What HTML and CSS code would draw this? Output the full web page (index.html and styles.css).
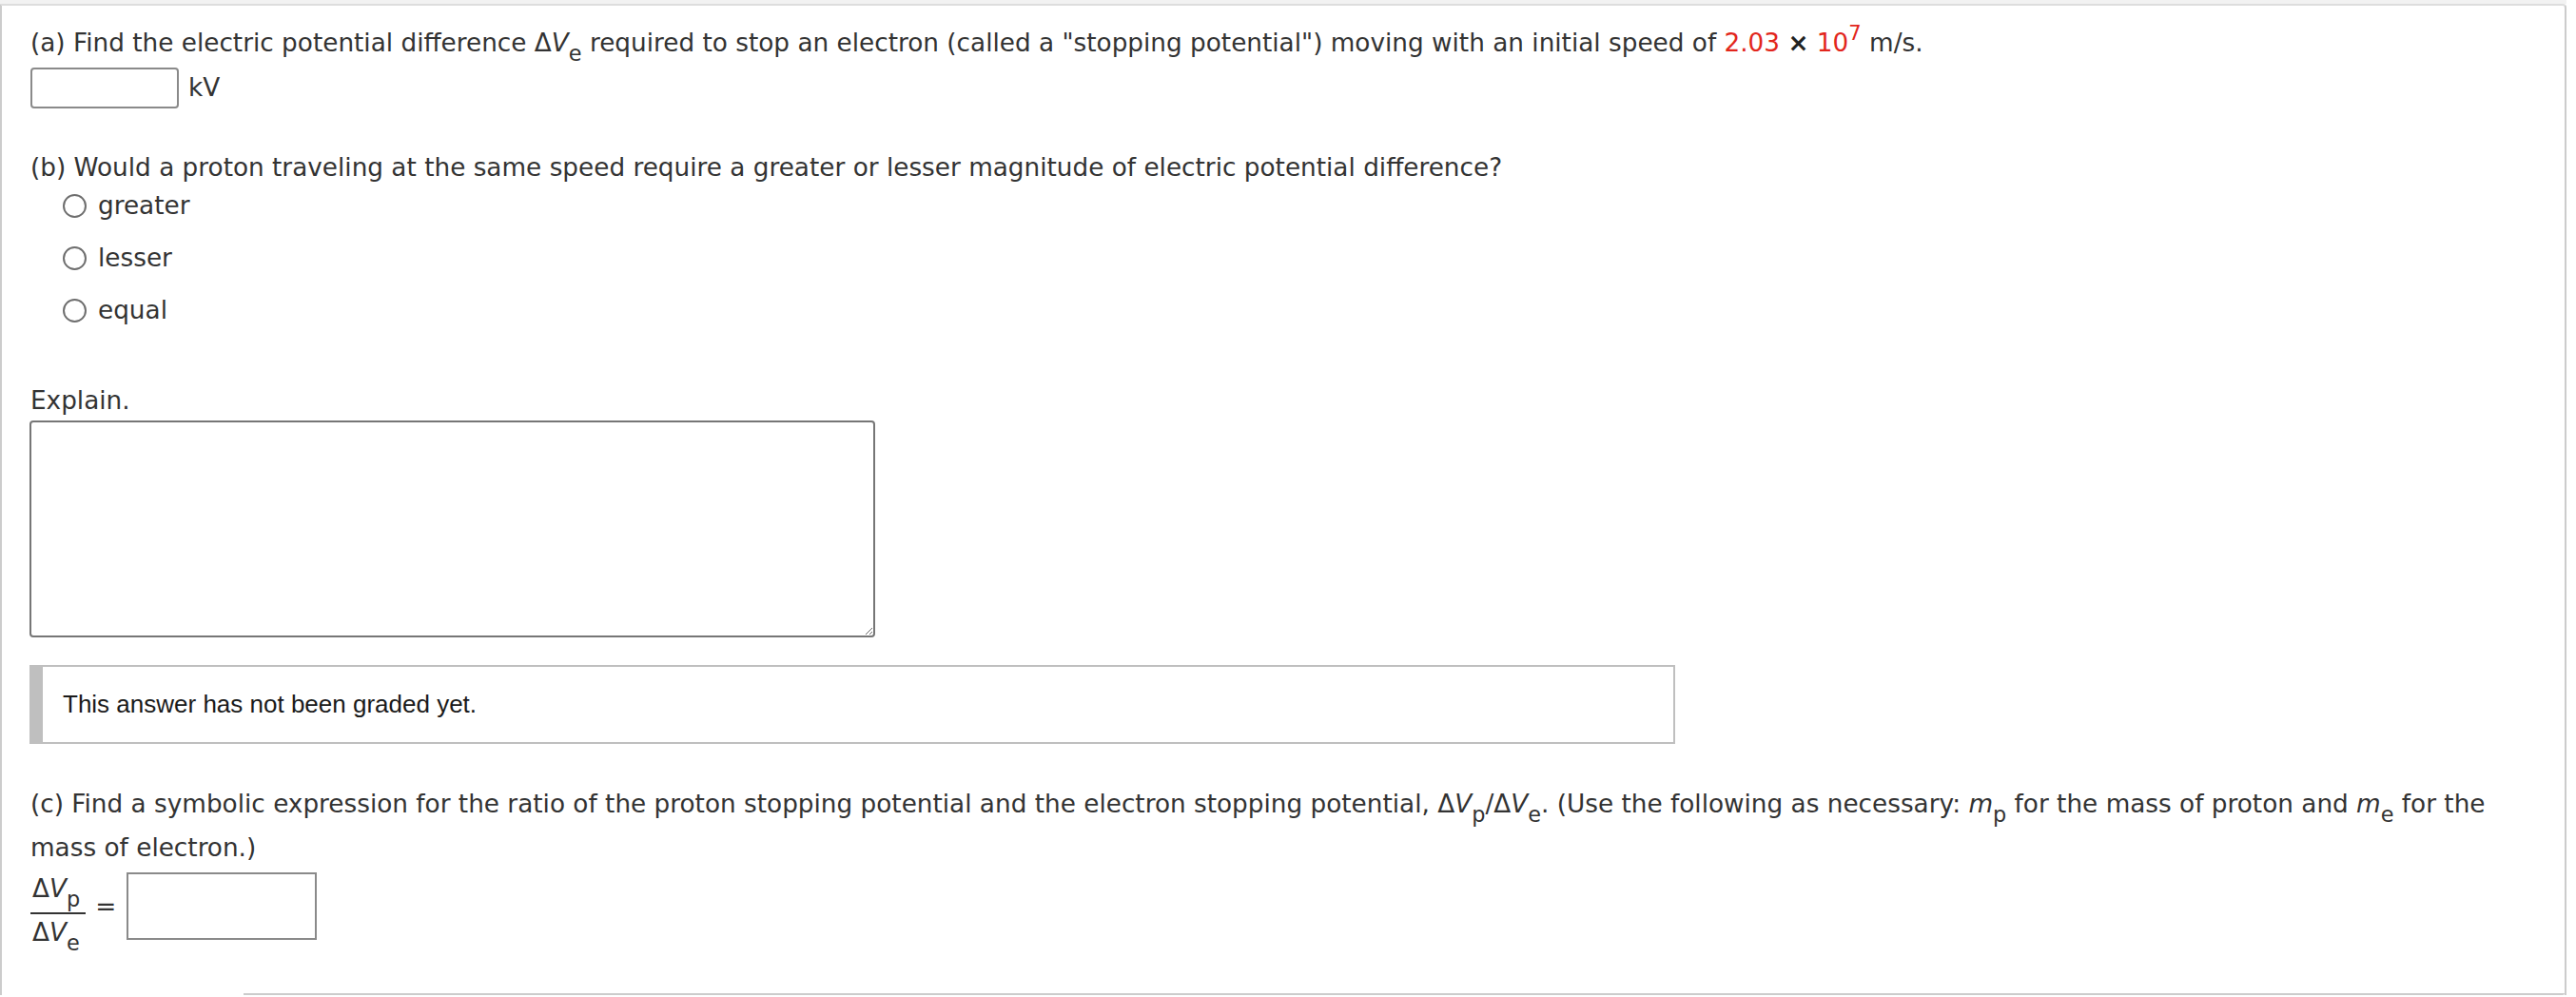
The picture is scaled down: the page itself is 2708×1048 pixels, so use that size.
FILE: index.html
```html
<!DOCTYPE html>
<html lang="en">
<head>
<meta charset="utf-8">
<title>Question</title>
<link rel="stylesheet" href="styles.css">
</head>
<body>
<div class="topstrip"></div>
<div class="card">
  <div class="content">
    <p class="q q-a">(a) Find the electric potential difference <span class="sym">&Delta;<i>V</i><sub>e</sub></span> required to stop an electron (called a "stopping potential") moving with an initial speed of <span class="red">2.03</span> <span class="times">&times;</span> <span class="red">10<sup>7</sup></span> m/s.</p>
    <div class="answer-row">
      <span class="input short"></span>
      <span class="unit">kV</span>
    </div>

    <p class="q q-b">(b) Would a proton traveling at the same speed require a greater or lesser magnitude of electric potential difference?</p>
    <ul class="radios">
      <li><span class="radio"></span><span>greater</span></li>
      <li><span class="radio"></span><span>lesser</span></li>
      <li><span class="radio"></span><span>equal</span></li>
    </ul>

    <p class="q explain">Explain.</p>
    <textarea class="essay" aria-label="Explain"></textarea>

    <div class="grade">This answer has not been graded yet.</div>

    <p class="q q-c">(c) Find a symbolic expression for the ratio of the proton stopping potential and the electron stopping potential, <span class="sym">&Delta;<i>V</i><sub>p</sub>/&Delta;<i>V</i><sub>e</sub></span>. (Use the following as necessary: <i>m</i><sub>p</sub> for the mass of proton and <i>m</i><sub>e</sub> for the<br>mass of electron.)</p>
    <div class="ratio-row">
      <span class="frac">
        <span class="num">&Delta;<i>V</i><sub>p</sub></span>
        <span class="den">&Delta;<i>V</i><sub>e</sub></span>
      </span>
      <span class="eq">=</span>
      <span class="input wide"></span>
    </div>
  </div>
  <div class="card-foot"></div>
</div>
</body>
</html>
```

FILE: styles.css
```css
html, body {
  margin: 0;
  padding: 0;
  background: #ffffff;
}

body {
  font-family: "DejaVu Sans", Verdana, sans-serif;
  font-size: 26.3px;
  color: #333333;
  width: 2708px;
  height: 1048px;
  overflow: hidden;
}

.topstrip {
  height: 4px;
  background: #f2f2f2;
  width: 2698px;
}

.card {
  width: 2694px;
  height: 1040px;
  border: 2px solid #cccccc;
  border-top-color: #dddddd;
  border-bottom: none;
  border-top-right-radius: 4px;
  display: flex;
  flex-direction: column;
}

.content {
  flex: 1;
  padding: 16px 30px 0 30px;
}

.card-foot {
  margin-left: 254px;
  height: 0;
  border-bottom: 2px solid #cccccc;
  border-bottom-right-radius: 6px;
}

.q {
  margin: 0;
}

.q-a {
  line-height: 46px;
}

.sym i, .q i, .frac i {
  font-style: italic;
}

sub {
  font-size: 0.85em;
  vertical-align: -0.45em;
  line-height: 0;
}

sup {
  font-size: 0.8em;
  vertical-align: 0.55em;
  line-height: 0;
}

.red {
  color: #e2261c;
}

.times {
  color: #222222;
  font-weight: bold;
}

.answer-row {
  display: flex;
  align-items: center;
  gap: 10px;
  margin-top: 3px;
}

.input {
  display: inline-block;
  box-sizing: border-box;
  background: #ffffff;
}

.input.short {
  width: 156px;
  height: 43px;
  border: 2px solid #8a8a8a;
  border-radius: 4px;
}

.unit {
  line-height: 43px;
}

.q-b {
  margin-top: 42px;
  line-height: 40px;
}

.radios {
  list-style: none;
  margin: 0;
  padding: 0 0 0 34px;
  display: flex;
  flex-direction: column;
  gap: 15px;
}

.radios li {
  display: flex;
  align-items: center;
  gap: 12px;
  height: 40px;
}

.radio {
  box-sizing: border-box;
  width: 25px;
  height: 25px;
  border: 2px solid #6e6e6e;
  border-radius: 50%;
  background: #ffffff;
}

.explain {
  margin-top: 55px;
  line-height: 40px;
}

.essay {
  display: block;
  box-sizing: border-box;
  width: 889px;
  height: 228px;
  margin: 1px 0 0 -1px;
  border: 2px solid #767676;
  border-radius: 4px;
  padding: 0;
  resize: both;
  font-family: inherit;
}

.grade {
  box-sizing: border-box;
  width: 1730px;
  height: 83px;
  margin: 29px 0 0 -1px;
  border: 2px solid #bfbfbf;
  border-left: 14px solid #bfbfbf;
  padding: 0 0 0 21px;
  display: flex;
  align-items: center;
  font-family: "Liberation Sans", Arial, sans-serif;
  font-size: 26px;
  color: #1a1a1a;
}

.q-c {
  margin-top: 40px;
  line-height: 46px;
}

.ratio-row {
  display: flex;
  align-items: center;
  margin-top: 3px;
  height: 71px;
}

.frac {
  display: inline-flex;
  flex-direction: column;
  align-items: stretch;
  line-height: 34px;
  margin-top: 8px;
}

.frac .num {
  border-bottom: 2px solid #333333;
  padding: 0 6px 8px 2px;
}

.frac .den {
  padding: 2px 6px 0 2px;
}

.eq {
  margin: 0 11px 0 10px;
}

.input.wide {
  width: 200px;
  height: 71px;
  border: 2px solid #8a8a8a;
}
```
